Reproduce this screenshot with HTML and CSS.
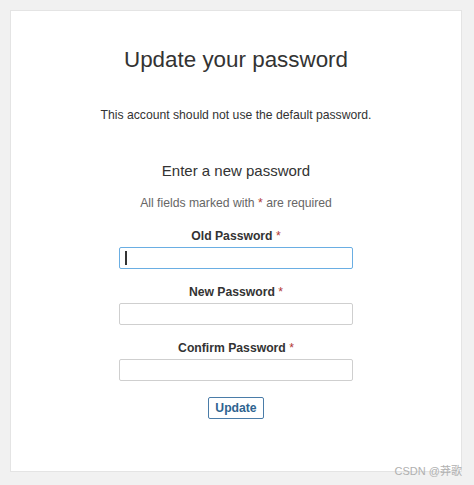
FILE: index.html
```html
<!DOCTYPE html>
<html lang="en">
<head>
<meta charset="utf-8">
<title>Update your password</title>
<link rel="stylesheet" href="styles.css">
</head>
<body>
<main class="card">
  <h1 class="title">Update your password</h1>
  <p class="notice">This account should not use the default password.</p>
  <h2 class="subtitle">Enter a new password</h2>
  <p class="hint">All fields marked with <span class="req">*</span> are required</p>
  <form class="form">
    <div class="field">
      <label class="label" for="old">Old Password <span class="req">*</span></label>
      <div class="input-wrap">
        <input class="input input-focus" id="old" type="password">
        <span class="caret"></span>
      </div>
    </div>
    <div class="field">
      <label class="label" for="new">New Password <span class="req">*</span></label>
      <div class="input-wrap">
        <input class="input" id="new" type="password">
      </div>
    </div>
    <div class="field">
      <label class="label" for="confirm">Confirm Password <span class="req">*</span></label>
      <div class="input-wrap">
        <input class="input" id="confirm" type="password">
      </div>
    </div>
    <button class="btn" type="button">Update</button>
  </form>
</main>
<div class="watermark">CSDN @莽歌</div>
</body>
</html>
```

FILE: styles.css
```css
html, body {
  margin: 0;
  padding: 0;
}
body {
  background: #f1f1f1;
  font-family: "Liberation Sans", Arial, "Noto Sans CJK SC", sans-serif;
  color: #333;
  width: 474px;
  height: 485px;
  position: relative;
  overflow: hidden;
}
.card {
  box-sizing: border-box;
  width: 452px;
  height: 462px;
  margin: 10px 0 0 10px;
  background: #fff;
  border: 1px solid #e4e4e4;
  display: flex;
  flex-direction: column;
  align-items: center;
  padding-top: 34.6px;
}
.title {
  margin: 0;
  font-size: 22.4px;
  font-weight: normal;
  line-height: 28px;
  color: #333;
}
.notice {
  margin: 33.2px 0 0;
  font-size: 12.2px;
  line-height: 16px;
  color: #333;
}
.subtitle {
  margin: 38px 0 0;
  font-size: 15px;
  font-weight: normal;
  line-height: 20px;
  color: #333;
}
.hint {
  margin: 14px 0 0;
  font-size: 12.2px;
  line-height: 16px;
  color: #666;
}
.req {
  color: #b23a36;
}
.form {
  margin-top: 17px;
  display: flex;
  flex-direction: column;
  align-items: center;
  gap: 15px;
}
.field {
  display: flex;
  flex-direction: column;
  align-items: center;
  gap: 3px;
}
.label {
  font-size: 12.2px;
  font-weight: bold;
  line-height: 16px;
  color: #333;
}
.label .req {
  font-weight: normal;
}
.input-wrap {
  position: relative;
}
.input {
  box-sizing: border-box;
  display: block;
  width: 234px;
  height: 22px;
  margin: 0;
  padding: 0 5px;
  border: 1px solid #cfcfcf;
  border-radius: 2px;
  background: #fff;
  outline: none;
  caret-color: transparent;
}
.input-focus {
  border-color: #6aaee3;
}
.caret {
  position: absolute;
  left: 6px;
  top: 4px;
  width: 1.5px;
  height: 14px;
  background: #333;
}
.btn {
  box-sizing: border-box;
  margin-top: 1px;
  width: 56px;
  height: 22px;
  padding: 0;
  border: 1px solid #4a7ca8;
  border-radius: 2px;
  background: #fff;
  font-family: "Liberation Sans", Arial, sans-serif;
  font-size: 12.2px;
  font-weight: bold;
  color: #2f6490;
  cursor: pointer;
}
.watermark {
  position: absolute;
  right: 12px;
  top: 464px;
  font-size: 11px;
  line-height: 14px;
  color: #b0b0b0;
  font-family: "Liberation Sans", "Noto Sans CJK SC", sans-serif;
}
```
